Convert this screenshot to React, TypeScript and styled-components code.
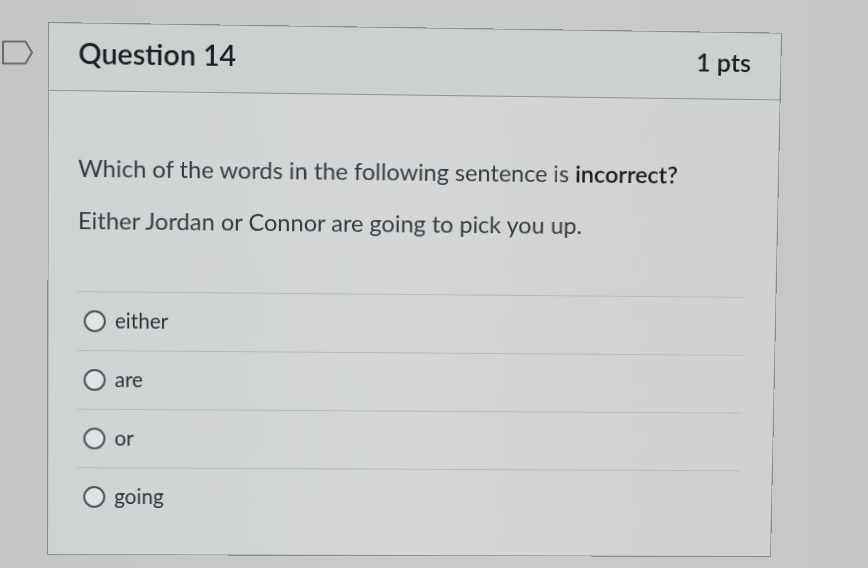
import React from 'react'
import styled, { createGlobalStyle } from 'styled-components'

const GlobalStyle = createGlobalStyle`
    html, body {
        margin: 0;
        padding: 0;
        background: #c7c9c9;
        font-family: Lato, "Open Sans", sans-serif;
        color: #2d3033;
    }
`

const answers = ['either', 'are', 'or', 'going']

// the screenshot is a photo taken at a slight angle, this maps the card onto that quad
const PHOTO_ANGLE = 'matrix3d(1.01654, 0.014819, 0, 0.00002253, -0.0019, 1.01407, 0, 0.00002639, 0, 0, 1, 0, 0, 0, 0, 1)'

const App = () => {
    return (
        <Page>
            <GlobalStyle />
            <Gutter>
                <FlagIcon width="34" height="26" viewBox="0 0 34 26">
                    <path d="M3 1.5 H25.5 L32 12.5 L25.5 23.5 H3 Z" fill="none" stroke="#6c6f71" strokeWidth="2" strokeLinejoin="round" />
                </FlagIcon>
            </Gutter>
            <Card>
                <Header>
                    <Title>Question 14</Title>
                    <Points>1 pts</Points>
                </Header>
                <Body>
                    <Prompt>
                        Which of the words in the following sentence is <strong>incorrect?</strong>
                    </Prompt>
                    <Prompt>Either Jordan or Connor are going to pick you up.</Prompt>
                    <AnswerList>
                        {answers.map((a) => (
                            <Answer key={a}>
                                <Radio />
                                <AnswerLabel>{a}</AnswerLabel>
                            </Answer>
                        ))}
                    </AnswerList>
                </Body>
            </Card>
        </Page>
    )
}

export default App

export const Page = styled.div`
    width: 868px;
    height: 568px;
    display: flex;
    flex-direction: row;
    align-items: flex-start;
    overflow: hidden;
    background: linear-gradient(90deg, #c4c6c6 0%, #cacccc 55%, #c5c7c6 100%);
`
export const Gutter = styled.div`
    width: 48px;
    padding-top: 40px;
    display: flex;
`
export const FlagIcon = styled.svg`
    display: block;
`
export const Card = styled.div`
    box-sizing: border-box;
    margin-top: 22px;
    width: 734px;
    height: 533px;
    border: 1px solid #8b8e8f;
    background: linear-gradient(90deg, #d0d3d4 0%, #d4d6d7 50%, #cfd1d0 100%);
    display: flex;
    flex-direction: column;
    transform: ${PHOTO_ANGLE};
    transform-origin: 0 0;
`
export const Header = styled.div`
    box-sizing: border-box;
    height: 67px;
    padding: 0 30px 8px 29px;
    display: flex;
    flex-direction: row;
    justify-content: space-between;
    align-items: center;
    border-bottom: 1px solid #8f9292;
    background: #cdd0d0;
`
export const Title = styled.div`
    font-size: 28.4px;
    font-weight: 600;
    color: #1c1f21;
`
export const Points = styled.div`
    font-size: 25.4px;
    font-weight: 600;
    color: #1c1f21;
`
export const Body = styled.div`
    padding: 62px 32px 0 29px;
    display: flex;
    flex-direction: column;
`
export const Prompt = styled.p`
    margin: 0 0 24px 0;
    font-size: 23.6px;
    line-height: 28px;
    color: #383c3f;
    & strong {
        font-weight: 600;
        color: #1a1c1e;
    }
`
export const AnswerList = styled.div`
    margin-top: 33px;
    display: flex;
    flex-direction: column;
`
export const Answer = styled.div`
    box-sizing: border-box;
    height: 59px;
    padding: 0 0 0 6px;
    border-top: 1px solid #b9bcbd;
    display: flex;
    flex-direction: row;
    align-items: center;
    gap: 9px;
`
export const Radio = styled.span`
    width: 22px;
    height: 22px;
    border: 2px solid #505457;
    border-radius: 50%;
    box-sizing: border-box;
    background: #e0e2e3;
`
export const AnswerLabel = styled.span`
    font-size: 20.6px;
    color: #2e3134;
    padding-bottom: 2px;
`
